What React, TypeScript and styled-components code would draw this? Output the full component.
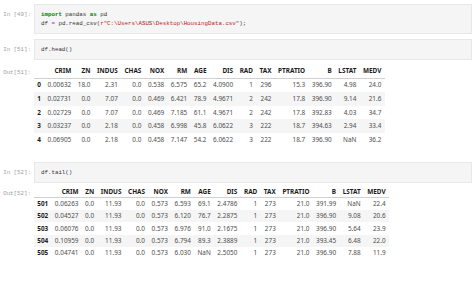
import styled, { createGlobalStyle } from 'styled-components';

const GlobalStyle = createGlobalStyle`
  html, body {
    margin: 0;
    padding: 0;
    background: #ffffff;
  }
  body {
    width: 474px;
    height: 289px;
    overflow: hidden;
  }
`;

const Notebook = styled.main`
  display: flex;
  flex-direction: column;
  padding: 4px 2px 0 0;
`;

const Cell = styled.section<{ $gap?: number }>`
  display: grid;
  grid-template-columns: 34px 1fr;
  align-items: start;
  margin-bottom: ${(p) => p.$gap ?? 5}px;
`;

const Prompt = styled.div<{ $top: number }>`
  font-family: 'Liberation Mono', monospace;
  font-size: 5.8px;
  line-height: 9px;
  color: #a0a0a0;
  text-align: right;
  padding-right: 3px;
  padding-top: ${(p) => p.$top}px;
  white-space: pre;
`;

const CodeBox = styled.pre`
  margin: 0;
  background: #f5f5f5;
  border: 1px solid #e8e8e8;
  padding: 5px 6px;
  font-family: 'Liberation Mono', monospace;
  font-size: 5.8px;
  line-height: 9px;
  color: #333333;
  white-space: pre;
`;

const Kw = styled.span`
  color: #008000;
  font-weight: 700;
`;

const Op = styled.span`
  color: #aa22ff;
`;

const Str = styled.span`
  color: #ba2121;
`;

const Frame = styled.table<{ $row: number; $head: number; $top: number }>`
  justify-self: start;
  margin-top: ${(p) => p.$top}px;
  border-collapse: collapse;
  font-family: 'Noto Sans', 'Open Sans', sans-serif;
  font-size: 6.4px;
  color: #4d4d4d;

  th,
  td {
    padding: 0 3.3px;
    text-align: right;
    white-space: nowrap;
    line-height: 1.2;
  }

  thead tr {
    height: ${(p) => p.$head}px;
    border-bottom: 1px solid #d0d0d0;
  }

  thead th {
    font-weight: 700;
    color: #1a1a1a;
    vertical-align: middle;
  }

  tbody tr {
    height: ${(p) => p.$row}px;
  }

  tbody tr:nth-child(even) {
    background: #f5f5f5;
  }

  tbody th {
    text-align: left;
    font-weight: 700;
    color: #1a1a1a;
  }
`;

const columns = ['CRIM', 'ZN', 'INDUS', 'CHAS', 'NOX', 'RM', 'AGE', 'DIS', 'RAD', 'TAX', 'PTRATIO', 'B', 'LSTAT', 'MEDV'];

const headRows: string[][] = [
  ['0', '0.00632', '18.0', '2.31', '0.0', '0.538', '6.575', '65.2', '4.0900', '1', '296', '15.3', '396.90', '4.98', '24.0'],
  ['1', '0.02731', '0.0', '7.07', '0.0', '0.469', '6.421', '78.9', '4.9671', '2', '242', '17.8', '396.90', '9.14', '21.6'],
  ['2', '0.02729', '0.0', '7.07', '0.0', '0.469', '7.185', '61.1', '4.9671', '2', '242', '17.8', '392.83', '4.03', '34.7'],
  ['3', '0.03237', '0.0', '2.18', '0.0', '0.458', '6.998', '45.8', '6.0622', '3', '222', '18.7', '394.63', '2.94', '33.4'],
  ['4', '0.06905', '0.0', '2.18', '0.0', '0.458', '7.147', '54.2', '6.0622', '3', '222', '18.7', '396.90', 'NaN', '36.2'],
];

const tailRows: string[][] = [
  ['501', '0.06263', '0.0', '11.93', '0.0', '0.573', '6.593', '69.1', '2.4786', '1', '273', '21.0', '391.99', 'NaN', '22.4'],
  ['502', '0.04527', '0.0', '11.93', '0.0', '0.573', '6.120', '76.7', '2.2875', '1', '273', '21.0', '396.90', '9.08', '20.6'],
  ['503', '0.06076', '0.0', '11.93', '0.0', '0.573', '6.976', '91.0', '2.1675', '1', '273', '21.0', '396.90', '5.64', '23.9'],
  ['504', '0.10959', '0.0', '11.93', '0.0', '0.573', '6.794', '89.3', '2.3889', '1', '273', '21.0', '393.45', '6.48', '22.0'],
  ['505', '0.04741', '0.0', '11.93', '0.0', '0.573', '6.030', 'NaN', '2.5050', '1', '273', '21.0', '396.90', '7.88', '11.9'],
];

function DataFrame({ rows, rowHeight, headHeight, top }: { rows: string[][]; rowHeight: number; headHeight: number; top: number }) {
  return (
    <Frame $row={rowHeight} $head={headHeight} $top={top}>
      <thead>
        <tr>
          <th />
          {columns.map((c) => (
            <th key={c}>{c}</th>
          ))}
        </tr>
      </thead>
      <tbody>
        {rows.map(([idx, ...vals]) => (
          <tr key={idx}>
            <th>{idx}</th>
            {vals.map((v, i) => (
              <td key={i}>{v}</td>
            ))}
          </tr>
        ))}
      </tbody>
    </Frame>
  );
}

export default function App() {
  return (
    <>
      <GlobalStyle />
      <Notebook>
        <Cell>
          <Prompt $top={6}>In [49]:</Prompt>
          <CodeBox>
            <Kw>import</Kw> pandas <Kw>as</Kw> pd{'\n'}
            df <Op>=</Op> pd.read_csv(<Str>r"C:\Users\ASUS\Desktop\HousingData.csv"</Str>);
          </CodeBox>
        </Cell>
        <Cell $gap={4}>
          <Prompt $top={6}>In [51]:</Prompt>
          <CodeBox>df.head()</CodeBox>
        </Cell>
        <Cell $gap={15}>
          <Prompt $top={4}>Out[51]:</Prompt>
          <DataFrame rows={headRows} rowHeight={13.75} headHeight={13} top={1} />
        </Cell>
        <Cell $gap={3}>
          <Prompt $top={6}>In [52]:</Prompt>
          <CodeBox>df.tail()</CodeBox>
        </Cell>
        <Cell>
          <Prompt $top={3}>Out[52]:</Prompt>
          <DataFrame rows={tailRows} rowHeight={12.3} headHeight={12} top={0} />
        </Cell>
      </Notebook>
    </>
  );
}
